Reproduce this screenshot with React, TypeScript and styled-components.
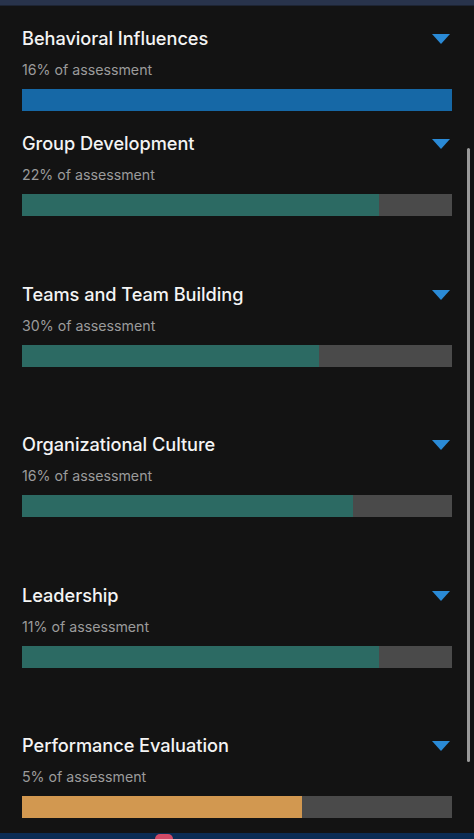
import React from "react";
import styled, { createGlobalStyle } from "styled-components";

const Global = createGlobalStyle`
  html, body { margin: 0; padding: 0; background: #131313; }
  body { font-family: Inter, "Noto Sans", sans-serif; -webkit-font-smoothing: antialiased; }
`;

const Screen = styled.div`
  position: relative;
  height: 839px;
  display: flex;
  flex-direction: column;
  background: #131313;
  overflow: hidden;
`;

const TopStrip = styled.div`
  height: 5px;
  background: #28334b;
  border-bottom: 1px solid #1d2433;
`;

const List = styled.div`
  flex: 1;
  padding: 21px 22px 0 22px;
  display: flex;
  flex-direction: column;
`;

const Section = styled.section<{ $gap: number }>`
  display: flex;
  flex-direction: column;
  padding-bottom: ${(p) => p.$gap}px;
`;

const Header = styled.div`
  display: flex;
  align-items: center;
  justify-content: space-between;
  height: 22px;
`;

const Title = styled.h2`
  margin: 0;
  font-size: 18.2px;
  font-weight: 500;
  color: #f4f4f4;
  letter-spacing: -0.05px;
`;

const Caret = styled.svg`
  width: 18px;
  height: 10px;
  margin-right: 2px;
  margin-top: 2px;
`;

const Sub = styled.div`
  margin-top: 12px;
  height: 18px;
  line-height: 18px;
  font-size: 14.2px;
  color: #9b9b9b;
`;

const Track = styled.div`
  margin-top: 10px;
  height: 22px;
  background: #4a4a4a;
  display: flex;
`;

const Fill = styled.div<{ $color: string }>`
  height: 100%;
  background: ${(p) => p.$color};
`;

const Scrollbar = styled.div`
  position: absolute;
  right: 4px;
  top: 148px;
  width: 3px;
  height: 614px;
  border-radius: 2px;
  background: #9a9a9a;
`;

const BottomStrip = styled.div`
  position: relative;
  height: 6px;
  background: #0b2c54;
`;

const RedDot = styled.div`
  position: absolute;
  left: 155px;
  top: 1px;
  width: 18px;
  height: 10px;
  border-radius: 5px;
  background: #d24a66;
`;

type Item = { title: string; pct: string; fill: number; color: string; gap: number };

const items: Item[] = [
  { title: "Behavioral Influences", pct: "16% of assessment", fill: 100, color: "#1668a6", gap: 21 },
  { title: "Group Development", pct: "22% of assessment", fill: 83, color: "#2c6a63", gap: 66.5 },
  { title: "Teams and Team Building", pct: "30% of assessment", fill: 69, color: "#2c6a63", gap: 66.5 },
  { title: "Organizational Culture", pct: "16% of assessment", fill: 77, color: "#2c6a63", gap: 66.5 },
  { title: "Leadership", pct: "11% of assessment", fill: 83, color: "#2c6a63", gap: 66.5 },
  { title: "Performance Evaluation", pct: "5% of assessment", fill: 65, color: "#d29850", gap: 0 },
];

export default function App() {
  return (
    <>
      <Global />
      <Screen>
        <TopStrip />
        <List>
          {items.map((it) => (
            <Section key={it.title} $gap={it.gap}>
              <Header>
                <Title>{it.title}</Title>
                <Caret viewBox="0 0 18 10">
                  <polygon points="0,0 18,0 9,10" fill="#2a8ad6" />
                </Caret>
              </Header>
              <Sub>{it.pct}</Sub>
              <Track>
                <Fill $color={it.color} style={{ width: `${it.fill}%` }} />
              </Track>
            </Section>
          ))}
        </List>
        <BottomStrip>
          <RedDot />
        </BottomStrip>
        <Scrollbar />
      </Screen>
    </>
  );
}
